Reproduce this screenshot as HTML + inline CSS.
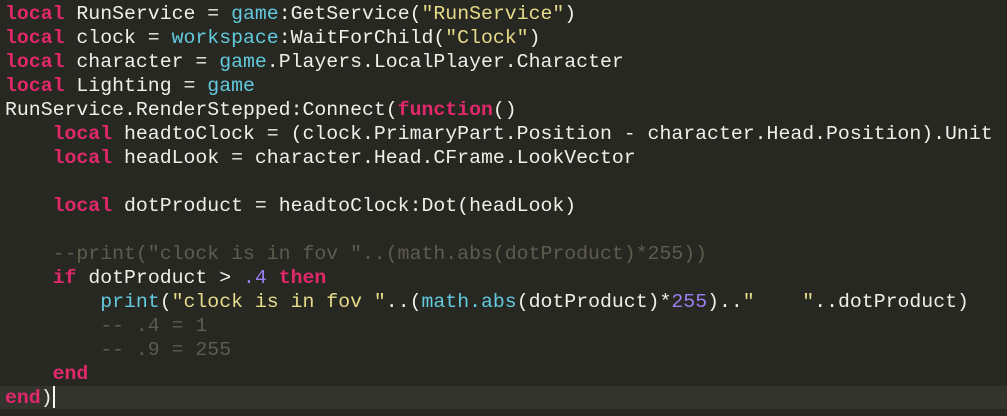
<!DOCTYPE html>
<html><head><style>
html,body{margin:0;padding:0;width:1007px;height:416px;overflow:hidden;background:#272822;}
pre{margin:0;position:absolute;top:2px;left:5px;font-family:"Liberation Mono",monospace;font-size:19.83px;line-height:24px;color:#f0f0ea;}
.k{color:#e0286a;font-weight:bold}
.c{color:#62c9de}
.s{color:#e6db8a}
.m{color:#5e5c4e}
.n{color:#9c7ff0}
.hl{position:absolute;left:0;top:386px;width:1007px;height:23px;background:#33342e;}
.cur{display:inline-block;width:2px;height:22px;background:#f8f8f0;vertical-align:-5px;}
</style></head><body>
<div class="hl"></div>
<pre><span class="k">local</span> RunService = <span class="c">game</span>:GetService(<span class="s">"RunService"</span>)
<span class="k">local</span> clock = <span class="c">workspace</span>:WaitForChild(<span class="s">"Clock"</span>)
<span class="k">local</span> character = <span class="c">game</span>.Players.LocalPlayer.Character
<span class="k">local</span> Lighting = <span class="c">game</span>
RunService.RenderStepped:Connect(<span class="k">function</span>()
    <span class="k">local</span> headtoClock = (clock.PrimaryPart.Position - character.Head.Position).Unit
    <span class="k">local</span> headLook = character.Head.CFrame.LookVector

    <span class="k">local</span> dotProduct = headtoClock:Dot(headLook)

    <span class="m">--print("clock is in fov "..(math.abs(dotProduct)*255))</span>
    <span class="k">if</span> dotProduct &gt; <span class="n">.4</span> <span class="k">then</span>
        <span class="c">print</span>(<span class="s">"clock is in fov "</span>..(<span class="c">math.abs</span>(dotProduct)*<span class="n">255</span>)..<span class="s">"    "</span>..dotProduct)
        <span class="m">-- .4 = 1</span>
        <span class="m">-- .9 = 255</span>
    <span class="k">end</span>
<span class="k">end</span>)<span class="cur"></span></pre>
</body></html>
